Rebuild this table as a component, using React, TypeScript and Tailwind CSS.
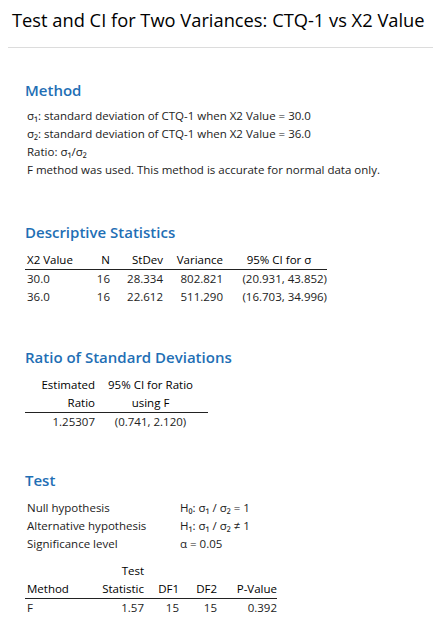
const font = { fontFamily: '"Open Sans", "Noto Sans", sans-serif' };

function Heading({ children }: { children: React.ReactNode }) {
  return (
    <h2 className="text-[15px] font-semibold leading-[20px] text-[#1f6fb5]">
      {children}
    </h2>
  );
}

export default function App() {
  return (
    <div
      className="min-h-[620px] w-[433px] bg-white text-[11.5px] leading-[18px] text-[#222]"
      style={font}
    >
      <div className="pl-3 pt-[8px] pb-[15px]">
        <h1 className="whitespace-nowrap text-[18.3px] font-medium leading-[24px] text-black">
          Test and CI for Two Variances: CTQ-1 vs X2 Value
        </h1>
      </div>
      <div className="ml-2 h-px bg-[#dcdcdc]" />

      <div className="pl-[25px] pt-[32px]">
        <section>
          <Heading>Method</Heading>
          <div className="mt-[7px] pl-[2px]">
            <p>σ₁: standard deviation of CTQ-1 when X2 Value = 30.0</p>
            <p>σ₂: standard deviation of CTQ-1 when X2 Value = 36.0</p>
            <p>Ratio: σ₁/σ₂</p>
            <p>F method was used. This method is accurate for normal data only.</p>
          </div>
        </section>

        <section className="mt-[43px]">
          <Heading>Descriptive Statistics</Heading>
          <table className="mt-[9px] border-collapse">
            <thead>
              <tr className="border-b border-[#222] text-black">
                <th className="w-[68px] pl-[2px] text-left font-medium">X2 Value</th>
                <th className="w-[17px] text-right font-medium">N</th>
                <th className="w-[53px] text-right font-medium">StDev</th>
                <th className="w-[60px] text-right font-medium">Variance</th>
                <th className="w-[104px] pl-[8px] text-center font-medium">95% CI for σ</th>
              </tr>
            </thead>
            <tbody>
              <tr>
                <td className="pl-[2px]">30.0</td>
                <td className="text-right">16</td>
                <td className="text-right">28.334</td>
                <td className="text-right">802.821</td>
                <td className="pl-[8px] text-right">(20.931, 43.852)</td>
              </tr>
              <tr>
                <td className="pl-[2px]">36.0</td>
                <td className="text-right">16</td>
                <td className="text-right">22.612</td>
                <td className="text-right">511.290</td>
                <td className="pl-[8px] text-right">(16.703, 34.996)</td>
              </tr>
            </tbody>
          </table>
        </section>

        <section className="mt-[41px]">
          <Heading>Ratio of Standard Deviations</Heading>
          <table className="mt-[9px] border-collapse">
            <thead>
              <tr className="border-b border-[#222] text-black">
                <th className="w-[70px] text-right align-bottom font-medium">
                  Estimated
                  <br />
                  Ratio
                </th>
                <th className="w-[113px] pl-[6px] pr-[8px] text-center align-bottom font-medium">
                  95% CI for Ratio
                  <br />
                  using F
                </th>
              </tr>
            </thead>
            <tbody>
              <tr>
                <td className="text-right">1.25307</td>
                <td className="pl-[6px] pr-[8px] text-center">(0.741, 2.120)</td>
              </tr>
            </tbody>
          </table>
        </section>

        <section className="mt-[39px]">
          <Heading>Test</Heading>
          <div className="mt-[9px] pl-[2px]">
            <div className="grid grid-cols-[153px_1fr]">
              <span>Null hypothesis</span>
              <span>H₀: σ₁ / σ₂ = 1</span>
              <span>Alternative hypothesis</span>
              <span>H₁: σ₁ / σ₂ ≠ 1</span>
              <span>Significance level</span>
              <span>α = 0.05</span>
            </div>
          </div>
          <table className="mt-[9px] border-collapse">
            <thead>
              <tr className="border-b border-[#222] text-black">
                <th className="w-[60px] pl-[2px] text-left align-bottom font-medium">Method</th>
                <th className="w-[59px] text-right align-bottom font-medium">
                  Test
                  <br />
                  Statistic
                </th>
                <th className="w-[35px] text-right align-bottom font-medium">DF1</th>
                <th className="w-[38px] text-right align-bottom font-medium">DF2</th>
                <th className="w-[60px] text-right align-bottom font-medium">P-Value</th>
              </tr>
            </thead>
            <tbody>
              <tr>
                <td className="pl-[2px]">F</td>
                <td className="text-right">1.57</td>
                <td className="text-right">15</td>
                <td className="text-right">15</td>
                <td className="text-right">0.392</td>
              </tr>
            </tbody>
          </table>
        </section>
      </div>
    </div>
  );
}
